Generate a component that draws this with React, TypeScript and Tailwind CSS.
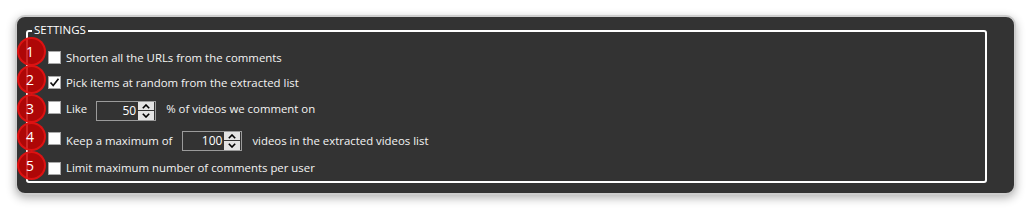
import React from 'react';

const font = { fontFamily: '"Open Sans", "Noto Sans", Arial, sans-serif' };

function Check({ checked }: { checked?: boolean }) {
  return (
    <span className="flex h-[13px] w-[13px] shrink-0 items-center justify-center border border-[#a9a9a9] bg-white">
      {checked && (
        <svg width="11" height="11" viewBox="0 0 11 11">
          <path d="M1.5 5.5 L4.2 8.5 L9.5 1.8" fill="none" stroke="#111" strokeWidth="1.7" />
        </svg>
      )}
    </span>
  );
}

function Spin({ value }: { value: number }) {
  return (
    <div className="flex h-[20px] w-[60px] shrink-0 border border-[#9b9b9b] bg-[#333333] text-[12px]">
      <span className="flex-1 pr-[2px] text-right leading-[18px] text-white">{value}</span>
      <div className="flex flex-col gap-[1px] pr-[1px]">
        <span className="flex h-[8px] w-[16px] items-center justify-center bg-[#e3e3e3]">
          <svg width="8" height="5" viewBox="0 0 8 5">
            <path d="M0.8 4.3 L4 1 L7.2 4.3" fill="none" stroke="#000" strokeWidth="1.6" />
          </svg>
        </span>
        <span className="flex h-[9px] w-[16px] items-center justify-center bg-[#e3e3e3]">
          <svg width="8" height="5" viewBox="0 0 8 5">
            <path d="M0.8 0.8 L4 4 L7.2 0.8" fill="none" stroke="#000" strokeWidth="1.6" />
          </svg>
        </span>
      </div>
    </div>
  );
}

const badges = [
  { n: 1, top: 'top-[20px]' },
  { n: 2, top: 'top-[48px]' },
  { n: 3, top: 'top-[77px]' },
  { n: 4, top: 'top-[105px]' },
  { n: 5, top: 'top-[134px]' },
];

export default function App() {
  return (
    <div className="h-[210px] w-[1032px] bg-white pl-[15px] pt-[15px]" style={font}>
      <div className="relative h-[180px] w-[1001px] rounded-[10px] border-2 border-[#cdcdcd] bg-[#333333] pl-[9px] pt-[13px] text-[11.4px] text-[#f4f4f4] shadow-[0_3px_10px_rgba(0,0,0,0.3)]">
        {/* group box */}
        <div className="relative h-[153px] w-[961px] rounded-[3px] border-2 border-white pl-[20px]">
          <span className="absolute left-[4px] top-[-10px] bg-[#333333] px-[2px] text-[11.5px] leading-[16px] text-white">
            SETTINGS
          </span>

          <div className="mt-[19px] flex h-[13px] items-center gap-[5px]">
            <Check />
            <span>Shorten all the URLs from the comments</span>
          </div>

          <div className="mt-[12px] flex h-[13px] items-center gap-[5px]">
            <Check checked />
            <span>Pick items at random from the extracted list</span>
          </div>

          <div className="mt-[12px] flex items-start">
            <Check />
            <span className="ml-[5px] leading-4">Like</span>
            <div className="ml-[9px]">
              <Spin value={50} />
            </div>
            <span className="ml-[10px] leading-4">% of videos we comment on</span>
          </div>

          <div className="mt-[10px] flex items-start">
            <div className="mt-[1px]">
              <Check />
            </div>
            <span className="ml-[5px] mt-[2px] leading-4">Keep a maximum of</span>
            <div className="ml-[10px]">
              <Spin value={100} />
            </div>
            <span className="ml-[10px] mt-[2px] leading-4">videos in the extracted videos list</span>
          </div>

          <div className="mt-[11px] flex h-[13px] items-center gap-[5px]">
            <Check />
            <span className="-mt-[2px]">Limit maximum number of comments per user</span>
          </div>
        </div>

        {badges.map((b) => (
          <div
            key={b.n}
            className={`absolute left-0 ${b.top} flex h-[29px] w-[29px] items-center justify-center rounded-full border-2 border-[#e31414]/90 bg-[#c40000]/85 pr-[3px] text-[14px] leading-none text-white`}
          >
            {b.n}
          </div>
        ))}
      </div>
    </div>
  );
}
